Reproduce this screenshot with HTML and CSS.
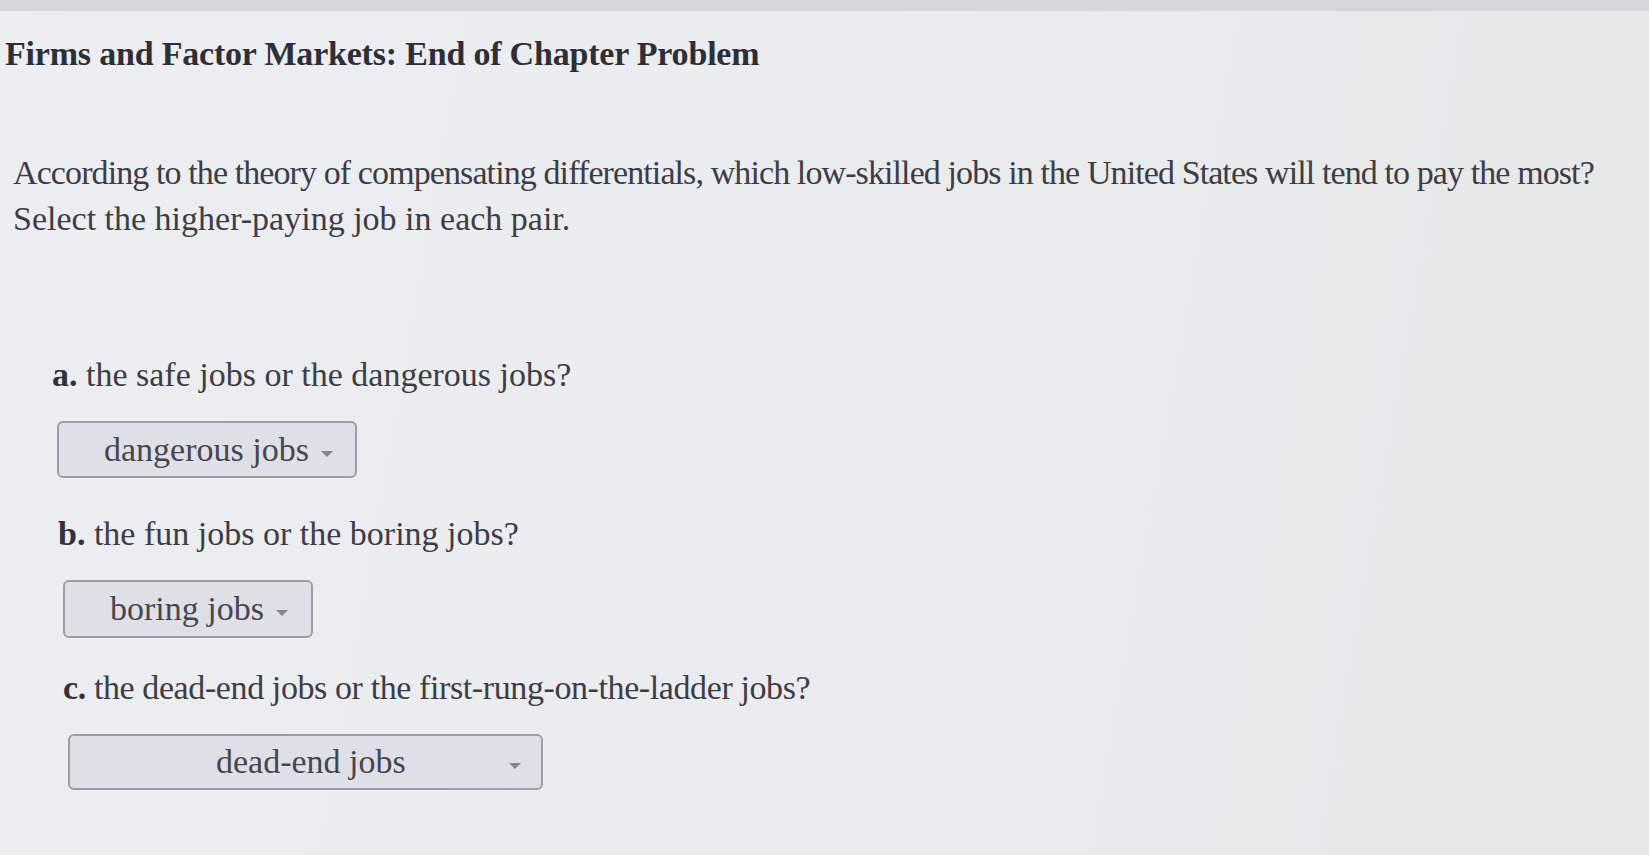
FILE: index.html
```html
<!DOCTYPE html>
<html lang="en">
<head>
<meta charset="utf-8">
<title>Firms and Factor Markets: End of Chapter Problem</title>
<link rel="stylesheet" href="styles.css">
</head>
<body>
<div class="topbar"></div>
<main class="page">
  <h1 class="title">Firms and Factor Markets: End of Chapter Problem</h1>
  <p class="intro"><span class="lead">According to the theory of compensating differentials, which low-skilled jobs in the United States will tend to pay the most?</span><br>Select the higher-paying job in each pair.</p>

  <section class="question qa">
    <p class="prompt"><b>a.</b> the safe jobs or the dangerous jobs?</p>
    <div class="select sel-a">
      <span class="value">dangerous jobs</span>
      <span class="caret"></span>
    </div>
  </section>

  <section class="question qb">
    <p class="prompt"><b>b.</b> the fun jobs or the boring jobs?</p>
    <div class="select sel-b">
      <span class="value">boring jobs</span>
      <span class="caret"></span>
    </div>
  </section>

  <section class="question qc">
    <p class="prompt prompt-long"><b>c.</b> the dead-end jobs or the first-rung-on-the-ladder jobs?</p>
    <div class="select sel-c">
      <span class="value">dead-end jobs</span>
      <span class="caret"></span>
    </div>
  </section>
</main>
</body>
</html>
```

FILE: styles.css
```css
html, body {
  margin: 0;
  padding: 0;
}
body {
  width: 1649px;
  height: 855px;
  overflow: hidden;
  background: linear-gradient(100deg, #eceef2 0%, #eaecef 45%, #e6e7e6 100%);
  font-family: "Liberation Serif", "Times New Roman", serif;
  color: #3d3d45;
}
.topbar {
  height: 11px;
  background: #d5d7db;
}
.page {
  display: flex;
  flex-direction: column;
  padding-left: 5px;
}
.title {
  margin: 23px 0 0 0;
  font-size: 34px;
  line-height: 40px;
  font-weight: bold;
  color: #2f2f37;
  letter-spacing: -0.2px;
}
.intro {
  margin: 76px 0 0 8px;
  font-size: 34px;
  line-height: 46px;
  white-space: nowrap;
}
.lead {
  letter-spacing: -0.9px;
}
.question {
  display: flex;
  flex-direction: column;
  align-items: flex-start;
}
.qa { margin: 113px 0 0 47px; }
.qb { margin: 36px 0 0 53px; }
.qc { margin: 30px 0 0 58px; }
.prompt {
  margin: 0;
  font-size: 34px;
  line-height: 40px;
}
.prompt-long {
  letter-spacing: -0.4px;
}
.prompt b {
  color: #33333b;
}
.select {
  box-sizing: border-box;
  display: flex;
  align-items: center;
  height: 57px;
  margin: 26px 0 0 5px;
  border: 2px solid #9d9ea5;
  border-radius: 6px;
  background: #dfe0e7;
  font-size: 34px;
  color: #46464e;
}
.sel-a { width: 300px; padding: 0 18px 0 45px; }
.sel-b { width: 250px; height: 58px; margin-top: 26px; padding: 0 18px 0 45px; }
.sel-c { width: 475px; height: 56px; margin-top: 26px; padding: 0 20px 0 146px; }
.value {
  line-height: 40px;
}
.caret {
  width: 0;
  height: 0;
  margin-left: 12px;
  margin-top: 8px;
  border-left: 6px solid transparent;
  border-right: 6px solid transparent;
  border-top: 6px solid #86868e;
}
.sel-c .caret {
  margin-left: auto;
}
```
